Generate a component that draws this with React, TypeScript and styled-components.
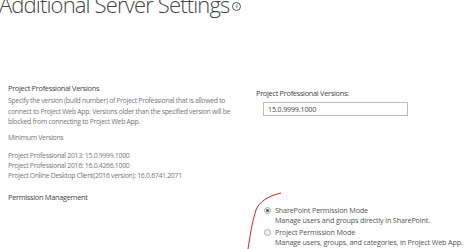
import React from "react";
import styled, { createGlobalStyle } from "styled-components";

const Global = createGlobalStyle`
  html, body { margin: 0; padding: 0; background: #fff; overflow: hidden; }
  body { font-family: "Open Sans", "Noto Sans", sans-serif; }
`;

const Page = styled.div`
  position: relative;
  width: 474px;
  height: 249px;
  overflow: hidden;
  background: #fff;
`;

const Title = styled.h1`
  margin: -10px 0 0 -1px;
  font-family: "Open Sans", sans-serif;
  font-weight: 300;
  font-size: 22px;
  line-height: 28px;
  color: #444;
  letter-spacing: -0.85px;
  display: flex;
  align-items: center;
  gap: 3px;
  white-space: nowrap;
`;

const InfoIcon = styled.span`
  display: inline-block;
  width: 7px;
  height: 7px;
  border: 1px solid #555;
  border-radius: 50%;
  font-size: 6px;
  line-height: 7px;
  letter-spacing: 0;
  text-align: center;
  font-weight: 600;
  margin-top: 4px;
`;

const Section = styled.section<{ $top: number }>`
  display: grid;
  grid-template-columns: 248px 1fr;
  margin-top: ${(p) => p.$top}px;
`;

const Left = styled.div`
  padding-left: 8px;
  white-space: nowrap;
`;

const Heading = styled.div`
  font-size: 7.4px;
  letter-spacing: -0.3px;
  line-height: 11px;
  color: #444;
`;

const Desc = styled.div<{ $lh?: number }>`
  font-size: 6.9px;
  letter-spacing: -0.3px;
  line-height: ${(p) => p.$lh ?? 10.5}px;
  color: #777;
  margin-top: 2px;
`;

const Gap = styled.div<{ $h: number }>`
  height: ${(p) => p.$h}px;
`;

const Right = styled.div<{ $pad: number }>`
  padding-top: ${(p) => p.$pad}px;
  padding-left: 8px;
  white-space: nowrap;
`;

const FieldLabel = styled.div`
  font-size: 7.4px;
  letter-spacing: -0.3px;
  line-height: 10px;
  color: #444;
`;

const Input = styled.div`
  margin: 4px 0 0 7px;
  width: 135px;
  height: 12px;
  border: 1px solid #bbb;
  padding: 0 4px;
  font-size: 7.1px;
  letter-spacing: -0.15px;
  line-height: 12px;
  color: #444;
`;

const RadioRow = styled.div`
  display: grid;
  grid-template-columns: 7px 1fr;
  column-gap: 4px;
  margin-left: 8px;
  margin-bottom: 2px;
`;

const Radio = styled.span<{ $on?: boolean }>`
  width: 5px;
  height: 5px;
  margin-top: 2px;
  border: 1px solid #aaa;
  border-radius: 50%;
  background: #f0f0f0;
  display: flex;
  align-items: center;
  justify-content: center;
  &::after {
    content: "";
    width: 3px;
    height: 3px;
    border-radius: 50%;
    background: ${(p) => (p.$on ? "#555" : "transparent")};
  }
`;

const RadioText = styled.div`
  font-size: 7.2px;
  letter-spacing: -0.15px;
  line-height: 10px;
  color: #555;
`;

const Annotation = styled.svg`
  position: absolute;
  left: 0;
  top: 0;
  pointer-events: none;
`;

export default function App() {
  return (
    <Page>
      <Global />
      <Title>
        Additional Server Settings <InfoIcon>i</InfoIcon>
      </Title>
      <Section $top={65}>
        <Left>
          <Heading>Project Professional Versions</Heading>
          <Desc>
            Specify the version (build number) of Project Professional that is allowed to
            <br />
            connect to Project Web App. Versions older than the specified version will be
            <br />
            blocked from connecting to Project Web App.
          </Desc>
          <Gap $h={3} />
          <Desc>Minimum Versions</Desc>
          <Gap $h={6} />
          <Desc $lh={9.8}>
            Project Professional 2013: 15.0.9999.1000
            <br />
            Project Professional 2016: 16.0.4266.1000
            <br />
            Project Online Desktop Client(2016 version): 16.0.6741.2071
          </Desc>
        </Left>
        <Right $pad={5}>
          <FieldLabel>Project Professional Versions:</FieldLabel>
          <Input>15.0.9999.1000</Input>
        </Right>
      </Section>
      <Section $top={12}>
        <Left>
          <Heading>Permission Management</Heading>
        </Left>
        <Right $pad={13}>
          <RadioRow>
            <Radio $on />
            <RadioText>
              SharePoint Permission Mode
              <br />
              Manage users and groups directly in SharePoint.
            </RadioText>
          </RadioRow>
          <RadioRow>
            <Radio />
            <RadioText>
              Project Permission Mode
              <br />
              Manage users, groups, and categories, in Project Web App.
            </RadioText>
          </RadioRow>
        </Right>
      </Section>
      <Annotation width="474" height="249" viewBox="0 0 474 249">
        <path
          d="M281 193 C 268 196, 259 202, 256 210 C 252 222, 250 236, 248 249"
          stroke="#d22"
          strokeWidth="1"
          fill="none"
        />
      </Annotation>
    </Page>
  );
}
